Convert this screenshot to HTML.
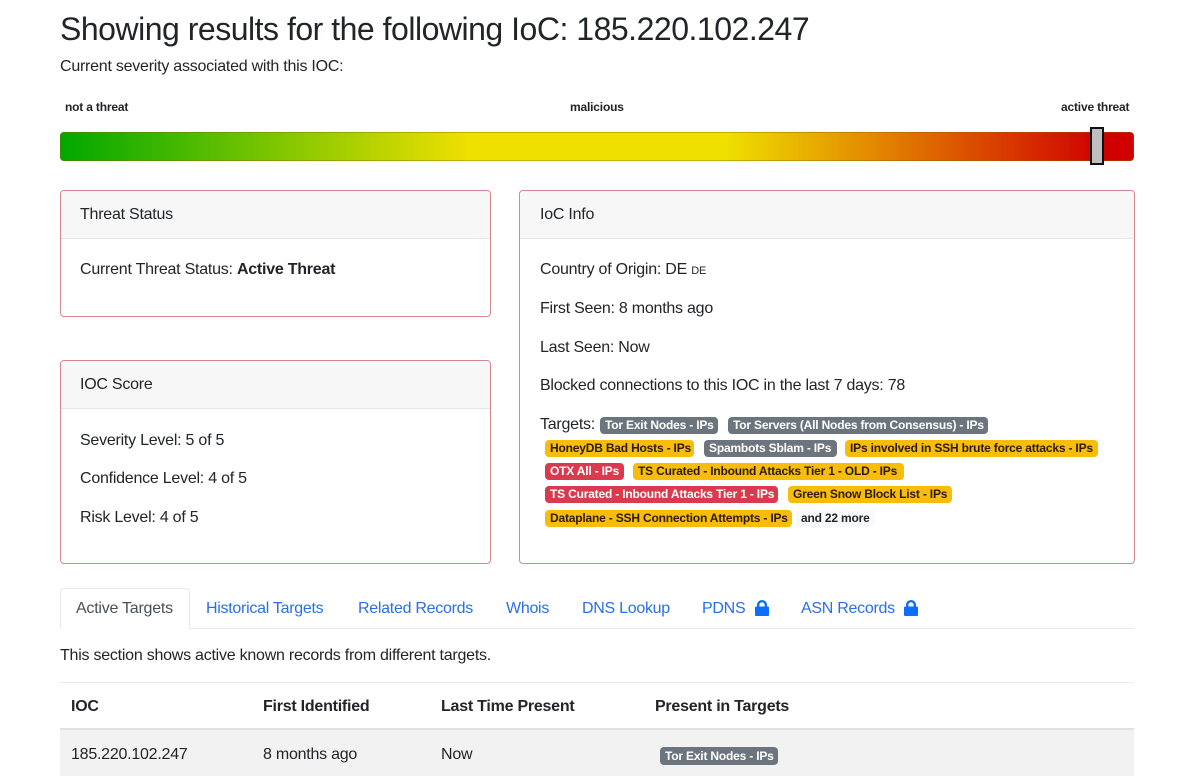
<!DOCTYPE html>
<html lang="en"><head><meta charset="utf-8"><title>IoC</title>
<style>
html,body{margin:0;padding:0;background:#fff}
body{width:1200px;height:776px;overflow:hidden;position:relative;font-family:"Liberation Sans",sans-serif;font-size:16px;color:#212529}
.a{position:absolute;white-space:nowrap;line-height:20px;letter-spacing:-.24px}
.card{position:absolute;box-sizing:border-box;border:1px solid #d4878f;border-radius:4px;overflow:hidden;background:#fff}
.card .h{height:47px;background:#f7f7f7;border-bottom:1px solid #e6e6e6}
.b{position:absolute;white-space:nowrap;font-size:12px;font-weight:700;line-height:17px;height:17px;border-radius:4px;padding:0 5px;box-sizing:border-box;letter-spacing:-.19px}
.g{background:#6c757d;color:#fff}.y{background:#f7bd0a;color:#2a1a10}.r{background:#d93a4e;color:#fff}
.l{color:#2a6fe8;letter-spacing:-.28px}
.a.s{font-size:12px;font-weight:700;letter-spacing:-.18px}
</style></head><body>
<div class="a" style="left:60px;top:10px;font-size:32px;line-height:38px;letter-spacing:-.49px">Showing results for the following IoC: 185.220.102.247</div>
<div class="a" style="left:60px;top:57px">Current severity associated with this IOC:</div>
<div class="a s" style="left:65px;top:97px">not a threat</div>
<div class="a s" style="left:570px;top:97px">malicious</div>
<div class="a s" style="left:1061px;top:97px">active threat</div>
<div style="position:absolute;left:60px;top:132px;width:1074px;height:29px;border-radius:4px;background:linear-gradient(90deg,#00a800 0%,#efe000 38%,#efe000 62%,#d00000 97%,#d00000 100%);box-shadow:inset 0 0 0 1px rgba(130,105,0,.4)"></div>
<div style="position:absolute;left:1090px;top:127px;width:14px;height:38px;box-sizing:border-box;border:2px solid #111;background:#bfbfbf"></div>

<div class="card" style="left:60px;top:190px;width:431px;height:127px"><div class="h"></div></div>
<div class="a" style="left:80px;top:205px">Threat Status</div>
<div class="a" style="left:80px;top:260px">Current Threat Status: <b>Active Threat</b></div>

<div class="card" style="left:60px;top:360px;width:431px;height:204px"><div class="h"></div></div>
<div class="a" style="left:80px;top:375px">IOC Score</div>
<div class="a" style="left:80px;top:431px">Severity Level: 5 of 5</div>
<div class="a" style="left:80px;top:469px">Confidence Level: 4 of 5</div>
<div class="a" style="left:80px;top:508px">Risk Level: 4 of 5</div>

<div class="card" style="left:519px;top:190px;width:616px;height:374px"><div class="h"></div></div>
<div class="a" style="left:540px;top:205px">IoC Info</div>
<div class="a" style="left:540px;top:260px">Country of Origin: DE <span style="font-size:11px">DE</span></div>
<div class="a" style="left:540px;top:299px">First Seen: 8 months ago</div>
<div class="a" style="left:540px;top:338px">Last Seen: Now</div>
<div class="a" style="left:540px;top:376px">Blocked connections to this IOC in the last 7 days: 78</div>
<div class="a" style="left:540px;top:415px">Targets:</div>
<span class="b g" style="left:600px;top:417px;width:118px">Tor Exit Nodes - IPs</span>
<span class="b g" style="left:728px;top:417px;width:260px">Tor Servers (All Nodes from Consensus) - IPs</span>
<span class="b y" style="left:545px;top:440px;width:149px">HoneyDB Bad Hosts - IPs</span>
<span class="b g" style="left:704px;top:440px;width:133px">Spambots Sblam - IPs</span>
<span class="b y" style="left:845px;top:440px;width:253px">IPs involved in SSH brute force attacks - IPs</span>
<span class="b r" style="left:545px;top:463px;width:79px">OTX All - IPs</span>
<span class="b y" style="left:633px;top:463px;width:271px">TS Curated - Inbound Attacks Tier 1 - OLD - IPs</span>
<span class="b r" style="left:545px;top:486px;width:233px">TS Curated - Inbound Attacks Tier 1 - IPs</span>
<span class="b y" style="left:788px;top:486px;width:164px">Green Snow Block List - IPs</span>
<span class="b y" style="left:545px;top:510px;width:247px">Dataplane - SSH Connection Attempts - IPs</span>
<span class="b" style="left:796px;top:510px;background:#f8f9fa">and 22 more</span>

<div style="position:absolute;left:60px;top:628px;width:1074px;height:1px;background:#e6e8ea"></div>
<div style="position:absolute;left:60px;top:588px;width:130px;height:41px;box-sizing:border-box;border:1px solid #e6e8ea;border-bottom:0;border-radius:4px 4px 0 0;background:#fff"></div>
<div class="a" style="left:76px;top:599px;color:#495057">Active Targets</div>
<div class="a l" style="left:206px;top:599px">Historical Targets</div>
<div class="a l" style="left:358px;top:599px">Related Records</div>
<div class="a l" style="left:506px;top:599px">Whois</div>
<div class="a l" style="left:582px;top:599px">DNS Lookup</div>
<div class="a l" style="left:702px;top:599px">PDNS</div>
<div class="a l" style="left:801px;top:599px">ASN Records</div>
<svg style="position:absolute;left:754.500px;top:600px" width="14" height="16" viewBox="0 0 14 16"><path fill="#0d6efd" d="M2 6.500V4.800a5 4.800 0 0 1 10 0v1.700h.7A1.300 1.300 0 0 1 14 7.800v6.900a1.300 1.300 0 0 1-1.300 1.300H1.300A1.300 1.300 0 0 1 0 14.700V7.800A1.300 1.300 0 0 1 1.300 6.500zm2.400 0h5.200V4.800a2.600 2.600 0 0 0-5.200 0z"/></svg>
<svg style="position:absolute;left:904px;top:600px" width="14" height="16" viewBox="0 0 14 16"><path fill="#0d6efd" d="M2 6.500V4.800a5 4.800 0 0 1 10 0v1.700h.7A1.300 1.300 0 0 1 14 7.800v6.900a1.300 1.300 0 0 1-1.300 1.300H1.300A1.300 1.300 0 0 1 0 14.700V7.800A1.300 1.300 0 0 1 1.300 6.500zm2.400 0h5.200V4.800a2.600 2.600 0 0 0-5.200 0z"/></svg>
<div class="a" style="left:60px;top:646px">This section shows active known records from different targets.</div>

<div style="position:absolute;left:60px;top:682px;width:1074px;height:1px;background:#e8eaec"></div>
<div class="a" style="left:71px;top:697px"><b>IOC</b></div>
<div class="a" style="left:263px;top:697px"><b>First Identified</b></div>
<div class="a" style="left:441px;top:697px"><b>Last Time Present</b></div>
<div class="a" style="left:655px;top:697px"><b>Present in Targets</b></div>
<div style="position:absolute;left:60px;top:728px;width:1074px;height:48px;background:#f2f2f2;border-top:2px solid #dfe2e5;box-sizing:border-box"></div>
<div class="a" style="left:71px;top:745px">185.220.102.247</div>
<div class="a" style="left:263px;top:745px">8 months ago</div>
<div class="a" style="left:441px;top:745px">Now</div>
<span class="b g" style="left:660px;top:747px;width:118px;height:18px;line-height:18px">Tor Exit Nodes - IPs</span>
</body></html>
